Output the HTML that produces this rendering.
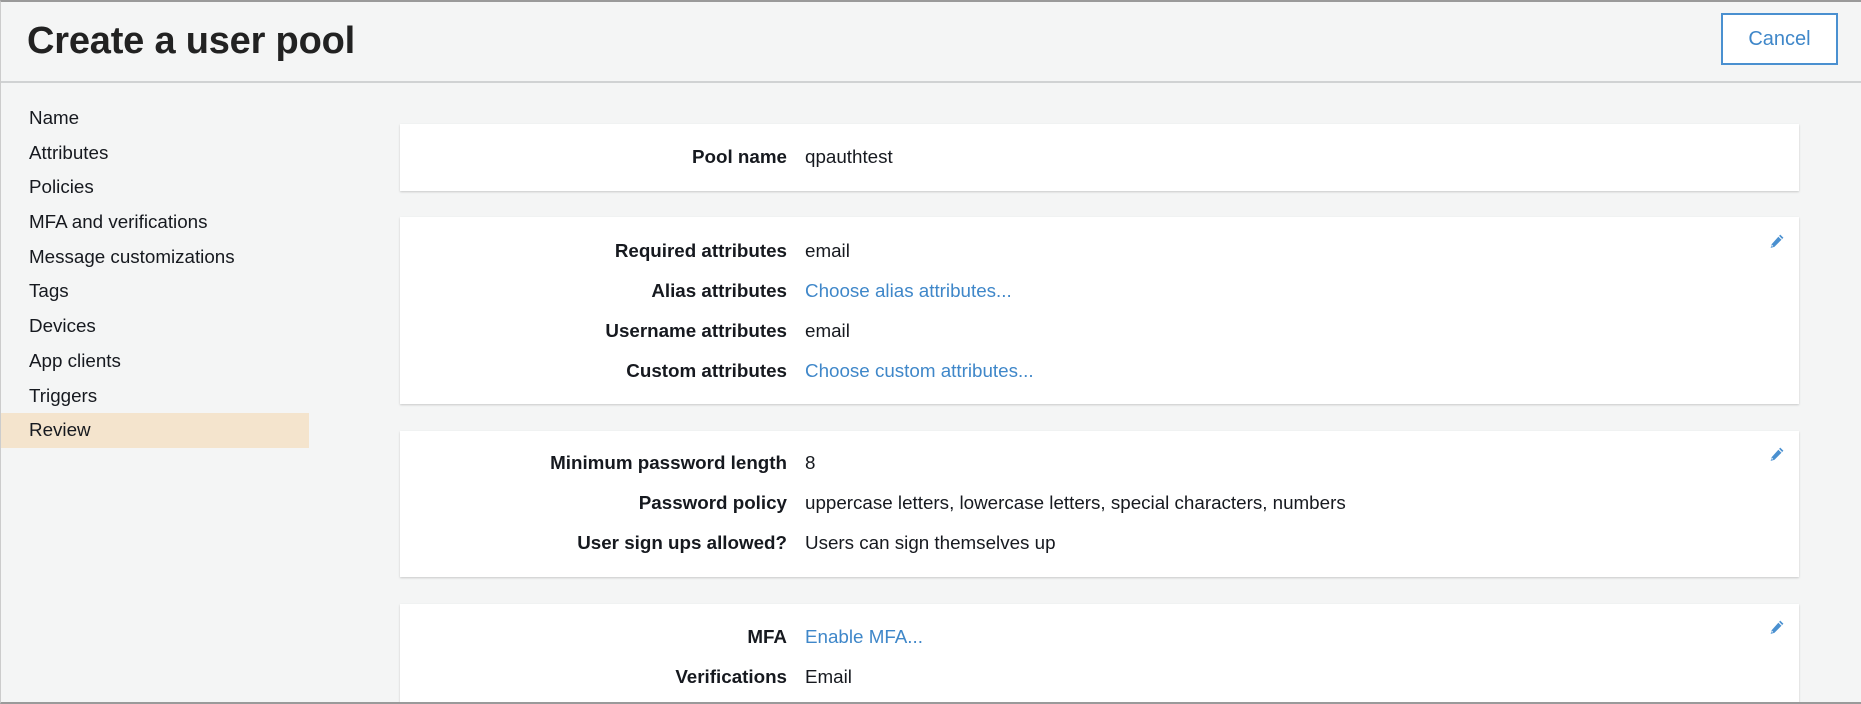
<!DOCTYPE html>
<html><head><meta charset="utf-8"><style>
*{margin:0;padding:0;box-sizing:border-box}
html,body{width:1861px;height:704px;overflow:hidden;background:#f4f5f5}
body{font-family:"Liberation Sans",Arial,sans-serif;color:#16191f}
.wrap{position:absolute;left:0;top:0;width:1861px;height:704px;overflow:hidden;border-top:2px solid #9a9a9a;border-bottom:2px solid #9a9a9a;border-left:1px solid #ccc}
.hdr{position:absolute;left:0;top:-2px;width:1861px;height:83px;border-bottom:2px solid #d0d2d3}
.hdr h1{position:absolute;left:26px;top:20px;font-size:38px;font-weight:bold;letter-spacing:-0.2px;color:#222}
.cancel{position:absolute;left:1720px;top:13px;width:117px;height:52px;border:2px solid #4a90d0;background:#fff;color:#3f87c9;font-size:20px;text-align:center;line-height:48px}
.nav{position:absolute;left:0;top:99px}
.nav div{height:34.7px;line-height:34.7px;padding-left:28px;font-size:18.8px;width:308px;color:#16191f}
.nav .act{background:#f4e4cd}
.card{position:absolute;left:399px;width:1399px;background:#fff;box-shadow:0 1px 2px rgba(0,0,0,.18)}
.row{position:absolute;left:0;width:100%;font-size:18.8px;line-height:22px}
.row b{position:absolute;right:1012px;white-space:nowrap}
.row span{position:absolute;left:405px;white-space:nowrap}
.link{color:#3f87c9}
.pen{position:absolute;right:14px;width:17px;height:17px}
</style></head><body><div class="wrap">
<div class="hdr"><h1>Create a user pool</h1><div class="cancel">Cancel</div></div>
<div class="nav">
<div>Name</div><div>Attributes</div><div>Policies</div><div>MFA and verifications</div><div>Message customizations</div><div>Tags</div><div>Devices</div><div>App clients</div><div>Triggers</div><div class="act">Review</div>
</div>
<div class="card" style="top:122px;height:67px">
<div class="row" style="top:22px"><b>Pool name</b><span>qpauthtest</span></div>
</div>
<div class="card" style="top:215px;height:187px">
<svg class="pen" style="top:16px" viewBox="0 0 16 16"><path d="M11.5 1.5l3 3-8.5 8.5-3.5 1 1-3.5z" fill="#4a90d0"/><path d="M3.2 12.8l0.5-1.8 1.3 1.3z" fill="#fff"/><path d="M10 3l3 3" stroke="#fff" stroke-width="1"/></svg>
<div class="row" style="top:23px"><b>Required attributes</b><span>email</span></div>
<div class="row" style="top:63px"><b>Alias attributes</b><span class="link">Choose alias attributes...</span></div>
<div class="row" style="top:103px"><b>Username attributes</b><span>email</span></div>
<div class="row" style="top:143px"><b>Custom attributes</b><span class="link">Choose custom attributes...</span></div>
</div>
<div class="card" style="top:429px;height:146px">
<svg class="pen" style="top:15px" viewBox="0 0 16 16"><path d="M11.5 1.5l3 3-8.5 8.5-3.5 1 1-3.5z" fill="#4a90d0"/><path d="M3.2 12.8l0.5-1.8 1.3 1.3z" fill="#fff"/><path d="M10 3l3 3" stroke="#fff" stroke-width="1"/></svg>
<div class="row" style="top:21px"><b>Minimum password length</b><span>8</span></div>
<div class="row" style="top:61px"><b>Password policy</b><span>uppercase letters, lowercase letters, special characters, numbers</span></div>
<div class="row" style="top:101px"><b>User sign ups allowed?</b><span>Users can sign themselves up</span></div>
</div>
<div class="card" style="top:602px;height:110px">
<svg class="pen" style="top:15px" viewBox="0 0 16 16"><path d="M11.5 1.5l3 3-8.5 8.5-3.5 1 1-3.5z" fill="#4a90d0"/><path d="M3.2 12.8l0.5-1.8 1.3 1.3z" fill="#fff"/><path d="M10 3l3 3" stroke="#fff" stroke-width="1"/></svg>
<div class="row" style="top:22px"><b>MFA</b><span class="link">Enable MFA...</span></div>
<div class="row" style="top:62px"><b>Verifications</b><span>Email</span></div>
</div>
</div></body></html>
